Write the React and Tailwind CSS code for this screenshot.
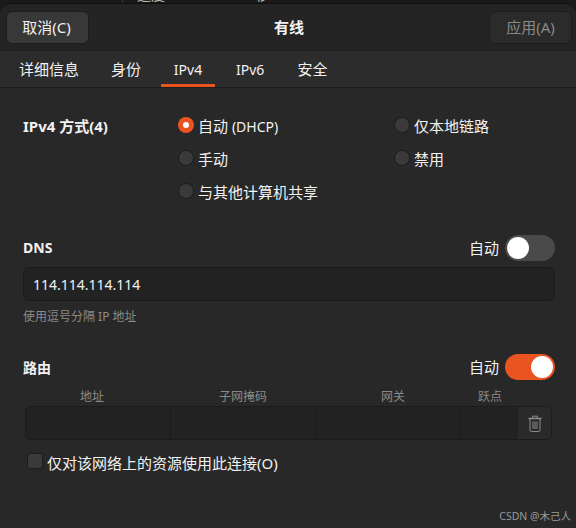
const Radio = ({ label, checked }) => (
  <div className="flex items-center gap-[4px] h-[22px]">
    {checked ? (
      <span className="flex w-[16px] h-[16px] mb-[2px] items-center justify-center rounded-full bg-[#e95420]">
        <span className="w-[6px] h-[6px] rounded-full bg-white" />
      </span>
    ) : (
      <span className="w-[16px] h-[16px] mb-[2px] rounded-full bg-[#3a3a3a] border border-[#1c1c1c]" />
    )}
    <span className="text-[15px] text-[#f2f2f2]">{label}</span>
  </div>
);

const Toggle = ({ on }) => (
  <div
    className={
      on
        ? "flex justify-end items-center w-[50px] h-[26px] p-[2px] rounded-full bg-[#e95420]"
        : "flex justify-start items-center w-[50px] h-[26px] p-[2px] rounded-full bg-[#4a4a4a]"
    }
  >
    <span className="w-[22px] h-[22px] rounded-full bg-white" />
  </div>
);

const TrashIcon = () => (
  <svg width="14" height="17" viewBox="0 0 14 17" fill="none" stroke="#8c8c8c" strokeWidth="1">
    <path d="M0.5 3.5h13" strokeWidth="1.4" />
    <path d="M4.5 3V1.2h5V3" />
    <path d="M2 4v11.2c0 .6.4 1.3 1.2 1.3h7.6c.8 0 1.2-.7 1.2-1.3V4" />
    <path d="M5 6.5v7.5M7 6.5v7.5M9 6.5v7.5" />
  </svg>
);

export default function App() {
  return (
    <div
      className="relative w-[576px] h-[528px] overflow-hidden bg-[#1a1a1a] pt-[3px]"
      style={{ fontFamily: '"Noto Sans", "Noto Sans CJK SC", sans-serif' }}
    >
      {/* window behind, only a sliver of its text shows */}
      <div className="absolute left-[137px] top-[-12px] flex text-[14px] leading-[14px] text-[#bdbdbd]">
        <span className="w-[56px]">速度</span>
        <span>1000 Mb/秒</span>
      </div>
      <div className="absolute left-[122px] top-0 w-px h-[3px] bg-[#333333]" />

      <div className="relative h-[525px] rounded-t-[12px] overflow-hidden border-t border-[#0e0e0e] bg-[#282828]">
        <div className="flex items-center justify-between h-[47px] pl-[6px] pr-[4px] bg-[#242424] border-b border-[#1b1b1b]">
          <button className="w-[83px] h-[33px] pr-[2px] rounded-[6px] bg-[#383838] border border-[#1d1d1d] text-[15px] text-[#f0f0f0]">
            取消(C)
          </button>
          <span className="text-[15px] font-bold text-[#f2f2f2]">有线</span>
          <button className="w-[83px] h-[33px] rounded-[6px] bg-[#2b2b2b] border border-[#1d1d1d] text-[15px] text-[#8a8a8a]">
            应用(A)
          </button>
        </div>

        <div className="flex h-[37px] px-[6px] bg-[#2c2c2c] border-b border-[#1b1b1b] text-[15px] text-[#f2f2f2]">
          <div className="flex items-center px-[13px]">详细信息</div>
          <div className="flex items-center pl-[19px] pr-[18px]">身份</div>
          <div className="flex items-center w-[54px] justify-center border-b-[3px] border-[#e95420] pt-[3px] ml-[2px] text-[14px]">IPv4</div>
          <div className="flex items-center pl-[21px] pr-[33px] text-[14px]">IPv6</div>
          <div className="flex items-center">安全</div>
        </div>

        <div className="pl-[23px] pr-[21px]">
          <div className="flex mt-[27px]">
            <div className="w-[155px] text-[15px] leading-[22px] font-bold text-[#f2f2f2]">IPv4 方式(4)</div>
            <div className="flex flex-col gap-[11px] w-[216px]">
              <Radio
                label={
                  <>
                    自动 <span className="text-[14px]">(DHCP)</span>
                  </>
                }
                checked
              />
              <Radio label="手动" />
              <Radio label="与其他计算机共享" />
            </div>
            <div className="flex flex-col gap-[11px]">
              <Radio label="仅本地链路" />
              <Radio label="禁用" />
            </div>
          </div>

          <div className="flex items-center justify-between mt-[32px] h-[26px]">
            <span className="mb-[2px] text-[14px] font-bold text-[#f2f2f2]">DNS</span>
            <div className="flex items-center gap-[6px]">
              <span className="text-[15px] text-[#f2f2f2]">自动</span>
              <Toggle />
            </div>
          </div>
          <div className="flex items-center mt-[6px] h-[34px] px-[9px] rounded-[6px] bg-[#222222] border border-[#1b1b1b] text-[14px] text-[#f2f2f2]">
            114.114.114.114
          </div>
          <div className="mt-[7px] text-[12px] text-[#8a8a8a]">使用逗号分隔 IP 地址</div>

          <div className="flex items-center justify-between mt-[28px] h-[26px]">
            <span className="text-[14px] font-bold text-[#f2f2f2]">路由</span>
            <div className="flex items-center gap-[6px]">
              <span className="text-[15px] text-[#f2f2f2]">自动</span>
              <Toggle on />
            </div>
          </div>

          <div className="flex ml-[2px] mt-[8px] h-[18px] items-center text-[12px] text-[#8a8a8a] text-center">
            <span className="w-[134px]">地址</span>
            <span className="w-[168px]">子网掩码</span>
            <span className="w-[132px]">网关</span>
            <span className="w-[62px]">跃点</span>
          </div>

          <div className="flex ml-[2px] w-[527px] h-[34px] rounded-[6px] overflow-hidden border border-[#1b1b1b]">
            <div className="w-[145px] bg-[#222222] border-r border-[#1b1b1b]" />
            <div className="w-[145px] bg-[#222222] border-r border-[#1b1b1b]" />
            <div className="w-[145px] bg-[#222222] border-r border-[#1b1b1b]" />
            <div className="w-[57px] bg-[#222222]" />
            <div className="flex flex-1 items-center justify-center bg-[#2a2a2a]">
              <TrashIcon />
            </div>
          </div>

          <div className="flex items-center gap-[4px] mt-[12px] ml-[4px]">
            <span className="w-[16px] h-[16px] mb-[4px] rounded-[3px] bg-[#3a3a3a] border border-[#1c1c1c]" />
            <span className="text-[15px] text-[#f2f2f2]">仅对该网络上的资源使用此连接(O)</span>
          </div>
        </div>
      </div>

      <div className="absolute right-[5px] bottom-[3px] text-[10.5px] text-[#9a9a9a]">CSDN @木己人</div>
    </div>
  );
}
